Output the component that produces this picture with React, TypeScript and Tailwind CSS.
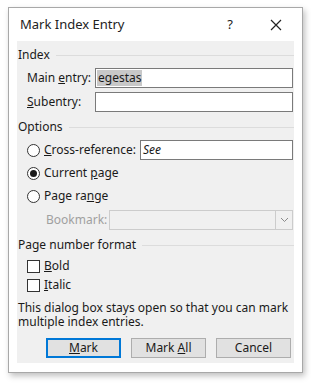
import React from 'react';

const font = { fontFamily: '"Noto Sans", "Open Sans", Arial, sans-serif' };

const Header = ({ label }: { label: string }) => (
  <div className="flex h-[16px] items-center pl-[1px]">
    <span className="text-[12px] leading-[16px] text-[#1a1a1a]">{label}</span>
    <div className="ml-[6px] h-px flex-1 bg-[#dcdcdc]"></div>
  </div>
);

const Radio = ({ checked }: { checked?: boolean }) => (
  <div className="flex h-[13px] w-[13px] items-center justify-center rounded-full border border-[#333] bg-white">
    {checked && <div className="h-[7px] w-[7px] rounded-full bg-[#1a1a1a]"></div>}
  </div>
);

const Box = () => <div className="h-[13px] w-[13px] border border-[#333] bg-white"></div>;

export default function App() {
  return (
    <div className="h-[383px] w-[311px] bg-white pl-[8px] pt-[7px]" style={font}>
      <div className="flex h-[366px] w-[295px] flex-col border border-[#a8a8a8] bg-white shadow-[2px_3px_6px_rgba(0,0,0,0.25)]">
        {/* Title bar */}
        <div className="flex h-[33px] items-center pl-[11px] pr-[20px]">
          <span className="flex-1 text-[13px] text-[#222]">Mark Index Entry</span>
          <span className="mr-[37px] text-[13px] text-[#222]">?</span>
          <svg width="12" height="12" viewBox="0 0 12 12">
            <path d="M1 1 L11 11 M11 1 L1 11" stroke="#222" strokeWidth="1.2" fill="none" />
          </svg>
        </div>

        {/* Body */}
        <div className="ml-[8px] mr-[8px] flex flex-1 flex-col bg-[#f0f0f0] pt-[6px] text-[12px] text-[#1a1a1a]">
          <Header label="Index" />
          <div className="mt-[5px] flex h-[20px] items-center pl-[10px] pr-[1px]">
            <span className="w-[68px]">
              Main <u>e</u>ntry:
            </span>
            <div className="flex h-[20px] flex-1 items-center border border-[#7a7a7a] bg-white px-[1px]">
              <span className="bg-[#c8c8c8] px-[1px] leading-[16px]">egestas</span>
            </div>
          </div>
          <div className="mt-[4px] flex h-[20px] items-center pl-[10px] pr-[1px]">
            <span className="w-[68px]">
              <u>S</u>ubentry:
            </span>
            <div className="h-[20px] flex-1 border border-[#7a7a7a] bg-white"></div>
          </div>

          <div className="mt-[7px]">
            <Header label="Options" />
          </div>
          <div className="mt-[5px] flex h-[20px] items-center pl-[10px] pr-[1px]">
            <Radio />
            <span className="ml-[4px] w-[96px]">
              <u>C</u>ross-reference:
            </span>
            <div className="flex h-[20px] flex-1 items-center border border-[#7a7a7a] bg-white pl-[2px] italic">
              See
            </div>
          </div>
          <div className="mt-[5px] flex h-[16px] items-center pl-[10px]">
            <Radio checked />
            <span className="ml-[4px]">
              Current <u>p</u>age
            </span>
          </div>
          <div className="mt-[7px] flex h-[16px] items-center pl-[10px]">
            <Radio />
            <span className="ml-[4px]">
              Page ra<u>n</u>ge
            </span>
          </div>
          <div className="mt-[6px] flex h-[20px] items-center pl-[29px] pr-[1px]">
            <span className="w-[63px] text-[#a0a0a0]">Bookmark:</span>
            <div className="flex h-[20px] flex-1 border border-[#cccccc] bg-[#f0f0f0]">
              <div className="flex-1"></div>
              <div className="flex w-[17px] items-center justify-center border-l border-[#cccccc]">
                <svg width="9" height="6" viewBox="0 0 9 6">
                  <path d="M1 1 L4.5 4.5 L8 1" stroke="#8a8a8a" strokeWidth="1" fill="none" />
                </svg>
              </div>
            </div>
          </div>

          <div className="mt-[7px]">
            <Header label="Page number format" />
          </div>
          <div className="mt-[5px] flex h-[16px] items-center pl-[10px]">
            <Box />
            <span className="ml-[4px]">
              <u>B</u>old
            </span>
          </div>
          <div className="mt-[3px] flex h-[16px] items-center pl-[10px]">
            <Box />
            <span className="ml-[4px]">
              <u>I</u>talic
            </span>
          </div>

          <p className="mt-[8px] pl-[1px] leading-[14px]">
            This dialog box stays open so that you can mark
            <br />
            multiple index entries.
          </p>

          <div className="mt-[9px] flex gap-[10px] pl-[29px] pr-[2px]">
            <button className="h-[20px] w-[75px] border-2 border-[#0078d7] bg-[#e1e1e1] text-[12px] leading-[16px]">
              <u>M</u>ark
            </button>
            <button className="h-[20px] w-[75px] border border-[#adadad] bg-[#e1e1e1] text-[12px] leading-[18px]">
              Mark <u>A</u>ll
            </button>
            <button className="h-[20px] w-[75px] border border-[#adadad] bg-[#e1e1e1] text-[12px] leading-[18px]">
              Cancel
            </button>
          </div>
        </div>
        <div className="h-[9px]"></div>
      </div>
    </div>
  );
}
